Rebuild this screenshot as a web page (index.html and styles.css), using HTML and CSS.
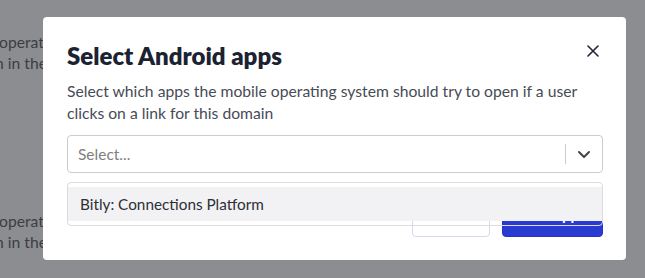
FILE: index.html
```html
<!DOCTYPE html>
<html>
<head>
<meta charset="utf-8">
<link rel="stylesheet" href="styles.css">
</head>
<body>
<div class="page">
  <div class="bg-block">
    <div class="bg-line">operating system</div>
    <div class="bg-line second">n in the app</div>
  </div>
  <div class="bg-block lower">
    <div class="bg-line">operating system</div>
    <div class="bg-line second">n in the app</div>
  </div>
</div>
<div class="overlay">
  <div class="modal">
    <div class="modal-head">
      <h2 class="title">Select Android apps</h2>
      <button class="close" aria-label="Close">
        <svg width="12" height="12" viewBox="0 0 12 12"><path d="M1 1L11 11M11 1L1 11" stroke="#1f2533" stroke-width="1.6" stroke-linecap="round"/></svg>
      </button>
    </div>
    <p class="desc">Select which apps the mobile operating system should try to open if a user clicks on a link for this domain</p>
    <div class="select-wrap">
      <div class="select">
        <span class="placeholder">Select...</span>
        <span class="sep"></span>
        <span class="chev">
          <svg width="14" height="9" viewBox="0 0 14 9"><path d="M2 2L7 7L12 2" fill="none" stroke="#444" stroke-width="2" stroke-linecap="round" stroke-linejoin="round"/></svg>
        </span>
      </div>
      <div class="menu">
        <div class="option">Bitly: Connections Platform</div>
      </div>
    </div>
    <div class="footer">
      <button class="btn btn-cancel">Cancel</button>
      <button class="btn btn-save">Save apps</button>
    </div>
  </div>
</div>
</body>
</html>
```
FILE: styles.css
```css
* { box-sizing: border-box; }
html, body { margin: 0; padding: 0; }
body {
  width: 645px;
  height: 278px;
  overflow: hidden;
  background: #8b8d90;
  font-family: "Lato", "Open Sans", sans-serif;
  position: relative;
}
.page {
  padding-top: 32px;
}
.bg-block {
  font-size: 15.7px;
  line-height: 21px;
  color: #3b3d42;
  white-space: nowrap;
}
.bg-block.lower { margin-top: 137px; }
.bg-line { margin-left: -1px; }
.bg-line.second { margin-left: -5px; }
.overlay {
  position: absolute;
  left: 43px;
  top: 17px;
  z-index: 1;
}
.modal {
  width: 583px;
  height: 243px;
  background: #fff;
  border-radius: 4px;
  padding: 23px 23px 23px 24px;
  display: flex;
  flex-direction: column;
}
.modal-head {
  display: flex;
  justify-content: space-between;
  align-items: flex-start;
}
.title {
  margin: 0;
  font-size: 24px;
  line-height: 31px;
  font-weight: 800;
  color: #1b2232;
}
.close {
  border: 0;
  background: none;
  padding: 0;
  margin: 5px 4px 0 0;
  width: 12px;
  height: 12px;
  display: flex;
}
.desc {
  margin: 9px 0 0;
  font-size: 15.7px;
  line-height: 22px;
  color: #474b55;
}
.select-wrap {
  position: relative;
  z-index: 5;
  margin-top: 11px;
}
.select {
  height: 38px;
  border: 1px solid #cccccc;
  border-radius: 4px;
  display: flex;
  align-items: center;
  padding-left: 10px;
}
.placeholder {
  flex: 1;
  font-size: 15.5px;
  color: #808080;
}
.sep {
  width: 1px;
  height: 20px;
  background: #cccccc;
}
.chev {
  width: 36px;
  display: flex;
  justify-content: center;
  align-items: center;
}
.menu {
  position: absolute;
  left: 0;
  right: 0;
  top: 47px;
  height: 44px;
  border: 1px solid #dcdcdc;
  border-radius: 4px;
  padding-top: 4px;
  background: linear-gradient(#fff 0 4px, transparent 4px);
  z-index: 5;
}
.option {
  height: 34px;
  background: #f2f2f4;
  font-size: 15.3px;
  line-height: 34px;
  padding-left: 12px;
  color: #2c2f36;
}
.footer {
  position: relative;
  z-index: 0;
  margin-top: auto;
  display: flex;
  justify-content: flex-end;
  gap: 12px;
}
.btn {
  height: 38px;
  border-radius: 4px;
  font-family: inherit;
  font-size: 15px;
  font-weight: 700;
  padding: 0 0 8px;
}
.btn-cancel {
  width: 78px;
  background: #fff;
  border: 1px solid #d6d8ee;
  color: #c9cbe0;
}
.btn-save {
  width: 101px;
  background: #2a3bd2;
  border: 1px solid #2433c4;
  color: #fff;
}
```
